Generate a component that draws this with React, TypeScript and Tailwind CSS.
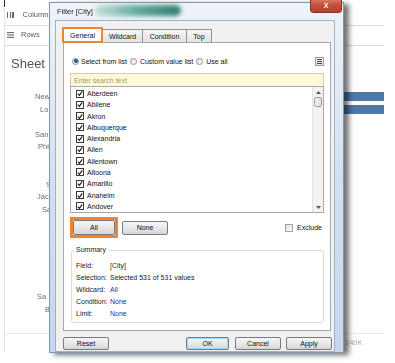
import React from "react";

const cities = [
  "Aberdeen",
  "Abilene",
  "Akron",
  "Albuquerque",
  "Alexandria",
  "Allen",
  "Allentown",
  "Altoona",
  "Amarillo",
  "Anaheim",
  "Andover",
];

const sheetRows: { name: string; pad: string; bar: string }[] = [
  { name: "New", pad: "pl-[30px]", bar: "w-[340px]" },
  { name: "Lo", pad: "pl-[35px]", bar: "w-[340px]" },
  { name: "", pad: "pl-[30px]", bar: "w-[180px]" },
  { name: "San", pad: "pl-[30px]", bar: "w-[150px]" },
  { name: "Phi", pad: "pl-[33px]", bar: "w-[140px]" },
  { name: "", pad: "pl-[30px]", bar: "w-[130px]" },
  { name: "", pad: "pl-[30px]", bar: "w-[120px]" },
  { name: "S", pad: "pl-[41px]", bar: "w-[110px]" },
  { name: "Jac", pad: "pl-[32px]", bar: "w-[105px]" },
  { name: "Sa", pad: "pl-[37px]", bar: "w-[100px]" },
  { name: "", pad: "pl-[30px]", bar: "w-[95px]" },
  { name: "", pad: "pl-[30px]", bar: "w-[90px]" },
  { name: "", pad: "pl-[30px]", bar: "w-[85px]" },
  { name: "", pad: "pl-[30px]", bar: "w-[80px]" },
  { name: "", pad: "pl-[30px]", bar: "w-[78px]" },
  { name: "", pad: "pl-[30px]", bar: "w-[75px]" },
  { name: "Sa", pad: "pl-[32px]", bar: "w-[72px]" },
  { name: "B", pad: "pl-[40px]", bar: "w-[70px]" },
];

function Check() {
  return (
    <svg width="7" height="7" viewBox="0 0 8 8">
      <path d="M1.1 4.2 L3.2 6.5 L7 1.2" fill="none" stroke="#111" strokeWidth="1.4" />
    </svg>
  );
}

function CheckBox() {
  return (
    <div className="flex h-[8px] w-[8px] shrink-0 items-center justify-center border border-[#3a3a3a] bg-white">
      <Check />
    </div>
  );
}

function Radio({ selected }: { selected?: boolean }) {
  return (
    <div className="flex h-[7px] w-[7px] shrink-0 items-center justify-center rounded-full border border-[#8e8f8f] bg-linear-to-br from-[#dcdcdc] to-[#ffffff]">
      {selected && <div className="h-[4px] w-[4px] rounded-full bg-[#2f5680]" />}
    </div>
  );
}

function WinButton({
  children,
  className,
}: {
  children: React.ReactNode;
  className: string;
}) {
  return (
    <div
      className={
        "flex shrink-0 items-center justify-center rounded-[2px] border border-[#7a7a7a] bg-linear-to-b from-[#f6f6f6] via-[#e8e8e8] to-[#d6d6d6] text-[7px] leading-none text-[#111] " +
        className
      }
    >
      {children}
    </div>
  );
}

function BackgroundApp() {
  return (
    <div className="flex h-[352px] w-[384px] flex-col overflow-hidden will-change-transform">
      <div className="flex h-[8px] shrink-0 pl-[4px]">
        <div className="h-[7px] w-[1px] bg-[#333]" />
      </div>
      <div className="flex flex-1 flex-col pl-[4px]">
        <div className="flex flex-1 flex-col border-l border-[#e4e4e4]">
          <div className="flex h-[18px] shrink-0 items-center gap-[5px] border-b border-[#dcdcdc] pb-[4px] pl-[2px] text-[7.5px] leading-none text-[#5a5a5a]">
            <div className="flex gap-[1.5px]">
              <div className="h-[6px] w-[1.2px] bg-[#6a6a6a]" />
              <div className="h-[6px] w-[1.2px] bg-[#6a6a6a]" />
              <div className="h-[6px] w-[1.2px] bg-[#6a6a6a]" />
            </div>
            <span className="ml-[4px]">Columns</span>
          </div>
          <div className="flex h-[20px] shrink-0 items-center gap-[4px] border-b border-[#dcdcdc] pb-[2px] pl-[2px] text-[7.5px] leading-none text-[#5a5a5a]">
            <svg width="7" height="6" viewBox="0 0 7 6">
              <rect x="0" y="0" width="7" height="1.1" fill="#6a6a6a" />
              <rect x="0" y="2.4" width="7" height="1.1" fill="#6a6a6a" />
              <rect x="0" y="4.8" width="7" height="1.1" fill="#6a6a6a" />
            </svg>
            <span className="ml-[3px]">Rows</span>
          </div>
          <div className="flex flex-1 flex-col">
            <div className="shrink-0 pl-[6px] pt-[10px] text-[13px] leading-[16px] text-[#555]">
              Sheet 1
            </div>
            <div className="mt-[18.5px] flex flex-col">
              {sheetRows.map((r, i) => (
                <div key={i} className="flex h-[12.5px] items-center">
                  <div
                    className={
                      "w-[46px] shrink-0 whitespace-nowrap text-[7.5px] leading-none text-[#6a6a6a] " +
                      r.pad
                    }
                  >
                    {r.name}
                  </div>
                  <div className={"h-[9px] shrink-0 bg-[#4e79a7] " + r.bar} />
                </div>
              ))}
            </div>
            <div className="mt-auto flex h-[19px] shrink-0 items-center border-t border-[#ececec] pl-[340px] text-[7.5px] leading-none text-[#aaa]">
              140K
            </div>
          </div>
        </div>
      </div>
    </div>
  );
}

function Dialog() {
  return (
    <div className="absolute left-[49px] top-[2px] flex h-[351px] w-[295px] flex-col border border-[#8196ae] bg-linear-to-b from-[#eef3f9] via-[#d2e1f1] to-[#c4d7ec] shadow-[5px_2px_5px_rgba(0,0,0,0.55)]">
      <div className="relative flex h-[17px] shrink-0 items-center pl-[7px] text-[7.5px] leading-none text-[#1e1e1e]">
        <span>Filter [City]</span>
        <div className="absolute left-[45px] top-[2px] h-[11px] w-[86px] rounded-full bg-linear-to-r from-[#c4e2dc] via-[#62a89b] to-[#2f7e70] blur-[2px]" />
        <div className="absolute right-[1px] top-[-8px] flex h-[18px] w-[32px] items-start justify-center rounded-b-[3px] border border-[#8a3326] bg-linear-to-b from-[#e3998c] via-[#c9543f] to-[#b5402c] pt-[6px] text-[7px] font-bold leading-none text-white">
          X
        </div>
      </div>
      <div className="ml-[5px] mr-[8px] flex flex-1 flex-col border border-[#9fb2c9] bg-[#f0f0f0]">
        {/* tabs */}
        <div className="mt-[6px] flex h-[15px] shrink-0 items-end pl-[6px] text-[7px] leading-none text-[#111]">
          <div className="relative z-10 -mb-[1px] flex h-[16px] w-[41px] items-center justify-center border-2 border-[#ec8433] bg-white">
            General
          </div>
          <div className="flex h-[13px] w-[40px] items-center justify-center border border-b-0 border-l-0 border-[#8e9299] bg-linear-to-b from-[#f6f6f6] to-[#e2e2e2]">
            Wildcard
          </div>
          <div className="flex h-[13px] w-[44px] items-center justify-center border border-b-0 border-l-0 border-[#8e9299] bg-linear-to-b from-[#f6f6f6] to-[#e2e2e2]">
            Condition
          </div>
          <div className="flex h-[13px] w-[25px] items-center justify-center border border-b-0 border-l-0 border-[#8e9299] bg-linear-to-b from-[#f6f6f6] to-[#e2e2e2]">
            Top
          </div>
        </div>
        {/* tab panel */}
        <div className="ml-[7px] flex h-[289px] w-[268px] shrink-0 flex-col border border-[#a3a7ad] bg-white px-[6px] text-[7px] leading-none text-[#111]">
          <div className="mt-[13px] flex h-[10px] shrink-0 items-center pl-[2px]">
            <Radio selected />
            <span className="ml-[2px]">Select from list</span>
            <div className="ml-[3px]">
              <Radio />
            </div>
            <span className="ml-[3px]">Custom value list</span>
            <div className="ml-[3px]">
              <Radio />
            </div>
            <span className="ml-[3px]">Use all</span>
            <div className="ml-auto flex h-[9px] w-[9px] flex-col items-center justify-center gap-[1px] border border-[#9a9a9a] bg-linear-to-b from-[#fafafa] to-[#e4e4e4]">
              <div className="h-[1px] w-[5px] bg-[#444]" />
              <div className="h-[1px] w-[5px] bg-[#444]" />
              <div className="h-[1px] w-[5px] bg-[#444]" />
            </div>
          </div>
          <div className="mt-[7px] flex h-[14px] shrink-0 items-center border border-[#cfcfb0] bg-[#fdf9d8] pl-[3px] text-[#9d9d6c]">
            Enter search text
          </div>
          <div className="-mt-[1px] flex h-[127px] shrink-0 border border-[#a9a9a9] bg-white">
            <div className="flex flex-1 flex-col pt-[1px]">
              {cities.map((c) => (
                <div key={c} className="flex h-[11.3px] items-center gap-[3px] pl-[5px]">
                  <CheckBox />
                  <span>{c}</span>
                </div>
              ))}
            </div>
            <div className="flex w-[11px] shrink-0 flex-col border-l border-[#e4e4e4] bg-[#f2f2f2]">
              <div className="flex h-[10px] items-center justify-center">
                <svg width="5" height="3" viewBox="0 0 5 3">
                  <path d="M0 3 L2.5 0 L5 3 Z" fill="#555" />
                </svg>
              </div>
              <div className="mx-[1px] h-[10px] rounded-[2px] border border-[#9c9c9c] bg-linear-to-r from-[#f4f4f4] to-[#dcdcdc]" />
              <div className="flex-1" />
              <div className="flex h-[10px] items-center justify-center">
                <svg width="5" height="3" viewBox="0 0 5 3">
                  <path d="M0 0 L2.5 3 L5 0 Z" fill="#555" />
                </svg>
              </div>
            </div>
          </div>
          <div className="mt-[4px] flex h-[21px] shrink-0 items-center">
            <div className="flex h-[21px] w-[48px] shrink-0 border-[3px] border-[#ec8433]">
              <WinButton className="h-full w-full">All</WinButton>
            </div>
            <WinButton className="ml-[4px] h-[14px] w-[46px]">None</WinButton>
            <div className="ml-auto mr-[2px] flex items-center gap-[4px]">
              <div className="h-[8px] w-[8px] border border-[#a4a4a4] bg-linear-to-br from-[#e0e0e0] to-[#fbfbfb]" />
              <span>Exclude</span>
            </div>
          </div>
          <fieldset className="mt-[8px] ml-[1px] mr-0 h-[77px] shrink-0 rounded-[3px] border border-[#d6dde5] pl-[4px]">
            <legend className="ml-[-2px] px-[2px] text-[7px] leading-[8px] text-[#222]">Summary</legend>
            <div className="flex flex-col pt-[5px]">
              {[
                ["Field:", "[City]", false],
                ["Selection:", "Selected 531 of 531 values", false],
                ["Wildcard:", "All", true],
                ["Condition:", "None", true],
                ["Limit:", "None", true],
              ].map(([l, v, blue]) => (
                <div key={l as string} className="flex h-[12px] items-center">
                  <span className="w-[34px] shrink-0 text-[#222]">{l}</span>
                  <span className={blue ? "text-[#2a2ab4]" : "text-[#222]"}>{v}</span>
                </div>
              ))}
            </div>
          </fieldset>
        </div>
        {/* bottom buttons */}
        <div className="mt-[6px] flex h-[13px] shrink-0 pl-[7px] pr-[2px]">
          <WinButton className="h-[13px] w-[46px]">Reset</WinButton>
          <WinButton className="ml-auto h-[13px] w-[43px] border-[#3c7fb1] shadow-[inset_0_0_0_1px_#a9d7f4]">OK</WinButton>
          <WinButton className="ml-[6px] h-[13px] w-[46px]">Cancel</WinButton>
          <WinButton className="ml-[5px] h-[13px] w-[46px]">Apply</WinButton>
        </div>
      </div>
    </div>
  );
}

export default function App() {
  return (
    <div className="relative h-[363px] w-[395px] overflow-hidden bg-white font-['Liberation_Sans',Arial,sans-serif]">
      <BackgroundApp />
      <Dialog />
    </div>
  );
}
